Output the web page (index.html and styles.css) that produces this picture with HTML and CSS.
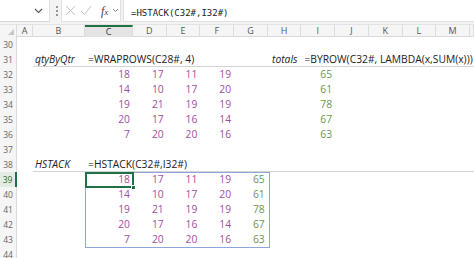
FILE: index.html
```html
<!DOCTYPE html>
<html>
<head>
<meta charset="utf-8">
<link rel="stylesheet" href="styles.css">
</head>
<body>
<div class="app">
  <header class="fbar">
    <div class="namebox">
      <svg class="chev" width="9" height="6" viewBox="0 0 9 6"><path d="M1 1l3.5 3.5L8 1" fill="none" stroke="#555" stroke-width="1.1"/></svg>
    </div>
    <div class="grip">
      <span></span><span></span><span></span>
    </div>
    <div class="fxbox">
      <svg width="11" height="11" viewBox="0 0 11 11"><path d="M1 1l9 9M10 1l-9 9" stroke="#c4c4c4" stroke-width="1"/></svg>
      <svg width="12" height="11" viewBox="0 0 12 11"><path d="M1 6l3.5 3.5L11 1" fill="none" stroke="#c4c4c4" stroke-width="1"/></svg>
      <span class="fx">f<span class="x">x</span></span>
      <svg width="7" height="5" viewBox="0 0 7 5"><path d="M1 1l2.5 2.5L6 1" fill="none" stroke="#888" stroke-width="1"/></svg>
    </div>
    <div class="finput">=HSTACK(C32#,I32#)</div>
  </header>

  <div class="sheet">
    <div class="row hdr">
      <div class="rh corner"><span class="tri"></span></div>
      <div class="ch">A</div><div class="ch">B</div><div class="ch sel-col">C</div><div class="ch">D</div><div class="ch">E</div><div class="ch">F</div><div class="ch">G</div><div class="ch">H</div><div class="ch">I</div><div class="ch">J</div><div class="ch">K</div><div class="ch">L</div><div class="ch">M</div><div class="ch"></div>
    </div>
    <div class="row"><div class="rh">30</div></div>
    <div class="row ruled">
      <div class="rh">31</div>
      <div class="cB lbl">qtyByQtr</div>
      <div class="cC fm">=WRAPROWS(C28#, 4)</div>
      <div class="cH lbl right">totals</div>
      <div class="cI fm">=BYROW(C32#, LAMBDA(x,SUM(x)))</div>
    </div>
    <div class="row"><div class="rh">32</div><div class="cC n p">18</div><div class="cD n p">17</div><div class="cE n p">11</div><div class="cF n p">19</div><div class="cI n g">65</div></div>
    <div class="row"><div class="rh">33</div><div class="cC n p">14</div><div class="cD n p">10</div><div class="cE n p">17</div><div class="cF n p">20</div><div class="cI n g">61</div></div>
    <div class="row"><div class="rh">34</div><div class="cC n p">19</div><div class="cD n p">21</div><div class="cE n p">19</div><div class="cF n p">19</div><div class="cI n g">78</div></div>
    <div class="row"><div class="rh">35</div><div class="cC n p">20</div><div class="cD n p">17</div><div class="cE n p">16</div><div class="cF n p">14</div><div class="cI n g">67</div></div>
    <div class="row"><div class="rh">36</div><div class="cC n p">7</div><div class="cD n p">20</div><div class="cE n p">20</div><div class="cF n p">16</div><div class="cI n g">63</div></div>
    <div class="row"><div class="rh">37</div></div>
    <div class="row ruled">
      <div class="rh">38</div>
      <div class="cB lbl">HSTACK</div>
      <div class="cC fm">=HSTACK(C32#,I32#)</div>
    </div>
    <div class="row"><div class="rh sel-row">39</div><div class="cC n p">18</div><div class="cD n p">17</div><div class="cE n p">11</div><div class="cF n p">19</div><div class="cG n g">65</div></div>
    <div class="row"><div class="rh">40</div><div class="cC n p">14</div><div class="cD n p">10</div><div class="cE n p">17</div><div class="cF n p">20</div><div class="cG n g">61</div></div>
    <div class="row"><div class="rh">41</div><div class="cC n p">19</div><div class="cD n p">21</div><div class="cE n p">19</div><div class="cF n p">19</div><div class="cG n g">78</div></div>
    <div class="row"><div class="rh">42</div><div class="cC n p">20</div><div class="cD n p">17</div><div class="cE n p">16</div><div class="cF n p">14</div><div class="cG n g">67</div></div>
    <div class="row"><div class="rh">43</div><div class="cC n p">7</div><div class="cD n p">20</div><div class="cE n p">20</div><div class="cF n p">16</div><div class="cG n g">63</div></div>
    <div class="row"><div class="rh">44</div></div>

    <div class="spill"></div>
    <div class="active"><span class="handle"></span></div>
  </div>
</div>
</body>
</html>
```

FILE: styles.css
```css
* { box-sizing: border-box; }
html, body { margin: 0; padding: 0; }
body {
  width: 474px;
  height: 258px;
  overflow: hidden;
  background: #ffffff;
  font-family: "Open Sans", "Noto Sans", sans-serif;
}
.app { width: 474px; height: 258px; overflow: hidden; }

/* formula bar */
.fbar {
  height: 25px;
  display: flex;
  align-items: flex-start;
  background: #f3f3f3;
  border-bottom: 1px solid #e3e3e3;
}
.namebox {
  width: 50px;
  height: 22px;
  background: #ffffff;
  border-bottom: 1px solid #d6d6d6;
  border-right: 1px solid #e0e0e0;
  display: flex;
  align-items: center;
  justify-content: flex-end;
  padding-right: 6px;
}
.grip {
  width: 10px;
  height: 22px;
  display: flex;
  flex-direction: column;
  align-items: center;
  justify-content: center;
  gap: 2px;
  margin-left: 2px;
}
.grip span { width: 2px; height: 2px; background: #777; border-radius: 1px; }
.fxbox {
  width: 60px;
  height: 22px;
  margin-left: -1px;
  background: #ffffff;
  border: 1px solid #e0e0e0;
  border-top: none;
  display: flex;
  align-items: center;
  gap: 4px;
  padding-left: 3px;
}
.fx {
  font-family: "Liberation Serif", serif;
  font-style: italic;
  font-size: 12px;
  color: #444;
  margin-left: 5px;
  line-height: 1;
}
.fx .x { font-size: 9px; }
.finput {
  flex: 1;
  height: 22px;
  margin-left: 2px;
  background: #ffffff;
  border: 1px solid #e0e0e0;
  border-top: none;
  border-right: none;
  font-family: "DejaVu Sans Mono", monospace;
  font-size: 9px;
  color: #222;
  display: flex;
  align-items: center;
  padding-left: 7px;
  padding-top: 4px;
}

/* sheet */
.sheet { position: relative; }
.row {
  display: grid;
  grid-template-columns: 17px 16px 52px 48px repeat(10, 33.7px) 1fr;
  grid-template-rows: 15px;
  height: 15px;
  font-size: 10.3px;
  line-height: 15px;
}
.row > * { grid-row: 1; white-space: nowrap; }
.row.hdr {
  grid-template-rows: 12px;
  height: 12px;
  line-height: 12px;
  background: #f5f5f5;
  border-bottom: 1px solid #dadada;
}
.ch {
  text-align: center;
  font-size: 9px;
  color: #555;
  border-right: 1px solid #dcdcdc;
}
.ch.sel-col {
  background: #e4e4e4;
  border-top: 2px solid #1e7145;
  line-height: 9px;
  color: #333;
}
.rh {
  grid-column: 1;
  background: #f5f5f5;
  border-right: 1px solid #dadada;
  font-size: 8.5px;
  color: #666;
  text-align: center;
}
.rh.corner { position: relative; border-right: 1px solid #dcdcdc; }
.tri {
  position: absolute;
  right: 2px;
  bottom: 2px;
  width: 0;
  height: 0;
  border-left: 6px solid transparent;
  border-bottom: 6px solid #c8c8c8;
}
.rh.sel-row {
  background: #e2ece4;
  color: #1e7145;
  border-right: 2px solid #1e7145;
}

.cB { grid-column: 3; }
.cC { grid-column: 4; }
.cD { grid-column: 5; }
.cE { grid-column: 6; }
.cF { grid-column: 7; }
.cG { grid-column: 8; }
.cH { grid-column: 9; }
.cI { grid-column: 10; }

.lbl { font-style: italic; color: #222; padding-left: 2px; }
.lbl.right { text-align: right; padding-right: 4px; direction: rtl; }
.fm { color: #222; padding-left: 3px; }
.n { text-align: right; padding-right: 3px; }
.p { color: #a24ea0; }
.g { color: #6c9550; }

.row.ruled::after {
  content: "";
  grid-row: 1;
  grid-column: 3 / -1;
  border-bottom: 1px solid #d4d4d4;
}

/* overlays */
.spill {
  position: absolute;
  left: 85px;
  top: 147px;
  width: 185px;
  height: 76px;
  border: 1px solid #8ea6dc;
  pointer-events: none;
}
.active {
  position: absolute;
  left: 85px;
  top: 147px;
  width: 49px;
  height: 16px;
  border: 2px solid #1e7145;
}
.handle {
  position: absolute;
  right: -4px;
  bottom: -4px;
  width: 5px;
  height: 5px;
  background: #1e7145;
  border: 1px solid #fff;
}
```
